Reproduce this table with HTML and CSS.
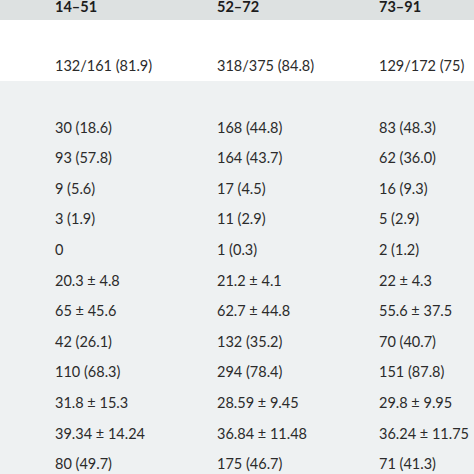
FILE: index.html
```html
<!DOCTYPE html>
<html>
<head>
<meta charset="utf-8">
<link rel="stylesheet" href="styles.css">
</head>
<body>
<div class="table">
  <div class="row head">
    <div class="cell"></div><div class="cell">14–51</div><div class="cell">52–72</div><div class="cell">73–91</div>
  </div>
  <div class="band white">
    <div class="row"><div class="cell"></div><div class="cell"></div><div class="cell"></div><div class="cell"></div></div>
    <div class="row"><div class="cell"></div><div class="cell">132/161 (81.9)</div><div class="cell">318/375 (84.8)</div><div class="cell">129/172 (75)</div></div>
  </div>
  <div class="band grey">
    <div class="row"><div class="cell"></div><div class="cell"></div><div class="cell"></div><div class="cell"></div></div>
    <div class="row"><div class="cell"></div><div class="cell">30 (18.6)</div><div class="cell">168 (44.8)</div><div class="cell">83 (48.3)</div></div>
    <div class="row"><div class="cell"></div><div class="cell">93 (57.8)</div><div class="cell">164 (43.7)</div><div class="cell">62 (36.0)</div></div>
    <div class="row"><div class="cell"></div><div class="cell">9 (5.6)</div><div class="cell">17 (4.5)</div><div class="cell">16 (9.3)</div></div>
    <div class="row"><div class="cell"></div><div class="cell">3 (1.9)</div><div class="cell">11 (2.9)</div><div class="cell">5 (2.9)</div></div>
    <div class="row"><div class="cell"></div><div class="cell">0</div><div class="cell">1 (0.3)</div><div class="cell">2 (1.2)</div></div>
    <div class="row"><div class="cell"></div><div class="cell">20.3 ± 4.8</div><div class="cell">21.2 ± 4.1</div><div class="cell">22 ± 4.3</div></div>
    <div class="row"><div class="cell"></div><div class="cell">65 ± 45.6</div><div class="cell">62.7 ± 44.8</div><div class="cell">55.6 ± 37.5</div></div>
    <div class="row"><div class="cell"></div><div class="cell">42 (26.1)</div><div class="cell">132 (35.2)</div><div class="cell">70 (40.7)</div></div>
    <div class="row"><div class="cell"></div><div class="cell">110 (68.3)</div><div class="cell">294 (78.4)</div><div class="cell">151 (87.8)</div></div>
    <div class="row"><div class="cell"></div><div class="cell">31.8 ± 15.3</div><div class="cell">28.59 ± 9.45</div><div class="cell">29.8 ± 9.95</div></div>
    <div class="row"><div class="cell"></div><div class="cell">39.34 ± 14.24</div><div class="cell">36.84 ± 11.48</div><div class="cell">36.24 ± 11.75</div></div>
    <div class="row"><div class="cell"></div><div class="cell">80 (49.7)</div><div class="cell">175 (46.7)</div><div class="cell">71 (41.3)</div></div>
  </div>
</div>
</body>
</html>
```
FILE: styles.css
```css
html, body {
  margin: 0;
  padding: 0;
  background: #ffffff;
  overflow: hidden;
}
.table {
  font-family: Lato, "Liberation Sans", sans-serif;
  font-size: 14.5px;
  color: #2b2b2b;
  width: 474px;
}
.row {
  display: grid;
  grid-template-columns: 55px 162px 162px 1fr;
  height: 30.6px;
  align-items: center;
  white-space: nowrap;
}
.head {
  height: 20px;
  align-items: end;
  background: #dde1e1;
  font-weight: 700;
  color: #1c1c1c;
}
.head .cell {
  line-height: 14px;
  padding-bottom: 6px;
}
.band.white {
  background: #ffffff;
}
.band.grey {
  background: #eef1f2;
  padding-bottom: 20px;
}
.cell {
  overflow: visible;
}
```
